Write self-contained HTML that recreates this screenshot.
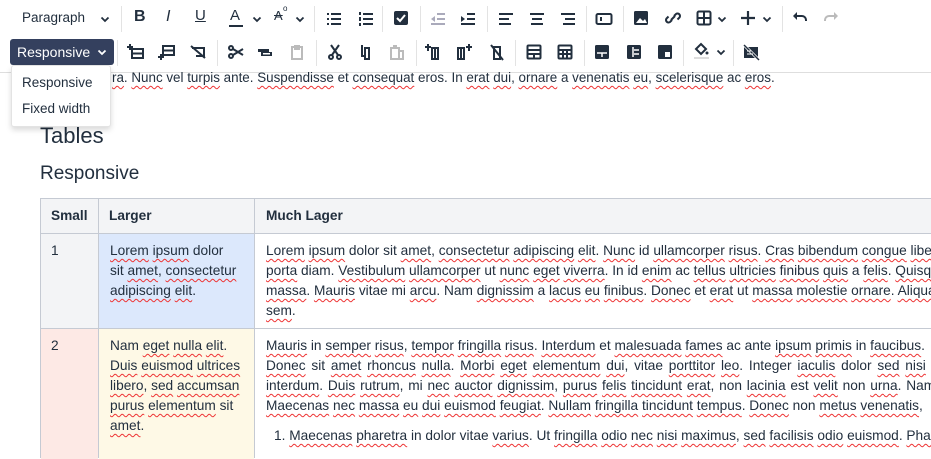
<!DOCTYPE html>
<html><head><meta charset="utf-8"><style>
*{margin:0;padding:0;box-sizing:border-box}
body{width:931px;height:451px;overflow:hidden;background:#fff;font-family:"Liberation Sans",sans-serif;color:#222f3e;position:relative}
.a{position:absolute}
.sep{position:absolute;width:1px;height:26px;background:#e3e3e3}
.ic{position:absolute;width:20px;height:20px}
.ch{position:absolute;width:10px;height:10px}
.t{position:absolute;white-space:nowrap;font-size:13.7px;line-height:20px}
.s{text-decoration:underline wavy #e33;text-decoration-thickness:1px;text-underline-offset:3px;text-decoration-skip-ink:none}
</style></head><body>
<svg width="0" height="0" style="position:absolute"><defs>
<symbol id="cv" viewBox="0 0 10 10"><path d="M1.5 3.5L5 7L8.5 3.5" fill="none" stroke="currentColor" stroke-width="1.8"/></symbol>
</defs></svg>

<!-- row 1 -->
<div class="a" style="left:22px;top:10px;font-size:13.5px;color:#222f3e">Paragraph</div>
<svg class="ch" style="left:100px;top:14px;color:#222f3e"><use href="#cv"/></svg>
<div class="sep" style="left:121px;top:6px"></div>
<div class="a" style="left:134px;top:8px;font-size:16px;font-weight:bold">B</div>
<div class="a" style="left:166px;top:8px;font-size:16px;font-style:italic">I</div>
<div class="a" style="left:195px;top:7px;font-size:15px;text-decoration:underline">U</div>
<div class="a" style="left:230px;top:7px;font-size:15px">A</div><div class="a" style="left:229px;top:25px;width:14px;height:2px;background:#222f3e"></div>
<svg class="ch" style="left:252px;top:14px"><use href="#cv"/></svg>
<div class="a" style="left:274px;top:8px;font-size:13px;text-decoration:line-through">A</div><div class="a" style="left:283px;top:4px;font-size:8px">o</div>
<svg class="ch" style="left:295px;top:14px"><use href="#cv"/></svg>
<div class="sep" style="left:314px;top:6px"></div>
<svg class="ic" style="left:324px;top:9px" viewBox="0 0 20 20"><g fill="#222f3e"><rect x="3" y="4" width="2" height="2"/><rect x="3" y="9" width="2" height="2"/><rect x="3" y="14" width="2" height="2"/><rect x="7" y="4" width="10" height="2"/><rect x="7" y="9" width="10" height="2"/><rect x="7" y="14" width="10" height="2"/></g></svg>
<svg class="ic" style="left:356px;top:9px" viewBox="0 0 20 20"><g fill="#222f3e"><rect x="3" y="3" width="2" height="3"/><rect x="3" y="8" width="2" height="4"/><rect x="3" y="14" width="2" height="3"/><rect x="7" y="4" width="10" height="2"/><rect x="7" y="9" width="10" height="2"/><rect x="7" y="14" width="10" height="2"/></g></svg>
<div class="sep" style="left:382px;top:6px"></div>
<svg class="ic" style="left:391px;top:8px" viewBox="0 0 20 20"><rect x="3" y="3" width="14" height="14" rx="2" fill="#222f3e"/><path d="M6 10l3 3 5-6" stroke="#fff" stroke-width="2" fill="none"/></svg>
<div class="sep" style="left:420px;top:6px"></div>
<svg class="ic" style="left:428px;top:9px" viewBox="0 0 20 20"><g fill="#aab"><rect x="9" y="4" width="8" height="2"/><rect x="9" y="9" width="8" height="2"/><rect x="3" y="14" width="14" height="2"/><path d="M3 10l4-3v6z"/></g></svg>
<svg class="ic" style="left:458px;top:9px" viewBox="0 0 20 20"><g fill="#222f3e"><rect x="9" y="4" width="8" height="2"/><rect x="9" y="9" width="8" height="2"/><rect x="3" y="14" width="14" height="2"/><path d="M7 10l-4-3v6z"/></g></svg>
<div class="sep" style="left:487px;top:6px"></div>
<svg class="ic" style="left:496px;top:9px" viewBox="0 0 20 20"><g fill="#222f3e"><rect x="3" y="4" width="14" height="2"/><rect x="3" y="9" width="10" height="2"/><rect x="3" y="14" width="12" height="2"/></g></svg>
<svg class="ic" style="left:527px;top:9px" viewBox="0 0 20 20"><g fill="#222f3e"><rect x="3" y="4" width="14" height="2"/><rect x="5" y="9" width="10" height="2"/><rect x="4" y="14" width="12" height="2"/></g></svg>
<svg class="ic" style="left:558px;top:9px" viewBox="0 0 20 20"><g fill="#222f3e"><rect x="3" y="4" width="14" height="2"/><rect x="7" y="9" width="10" height="2"/><rect x="5" y="14" width="12" height="2"/></g></svg>
<div class="sep" style="left:586px;top:6px"></div>
<svg class="ic" style="left:594px;top:9px" viewBox="0 0 20 20"><rect x="2.5" y="5" width="15" height="10" rx="1.5" fill="none" stroke="#222f3e" stroke-width="2"/><rect x="6" y="8" width="2" height="4" fill="#222f3e"/></svg>
<div class="sep" style="left:623px;top:6px"></div>
<svg class="ic" style="left:631px;top:8px" viewBox="0 0 20 20"><rect x="3" y="3" width="14" height="14" rx="1.5" fill="#222f3e"/><path d="M5 15l4-5 3 3 2-2 2 4z" fill="#fff"/></svg>
<svg class="ic" style="left:663px;top:8px" viewBox="0 0 20 20"><g fill="none" stroke="#222f3e" stroke-width="2"><path d="M9 12l-2 2a2.5 2.5 0 01-3.5-3.5l2-2"/><path d="M11 8l2-2a2.5 2.5 0 013.5 3.5l-2 2"/><path d="M8 12l4-4"/></g></svg>
<svg class="ic" style="left:694px;top:8px" viewBox="0 0 20 20"><rect x="3.5" y="3.5" width="13" height="13" rx="1.5" fill="none" stroke="#222f3e" stroke-width="2"/><path d="M10 4v12M4 10h12" stroke="#222f3e" stroke-width="2"/></svg>
<svg class="ch" style="left:717px;top:14px"><use href="#cv"/></svg>
<svg class="ic" style="left:738px;top:8px" viewBox="0 0 20 20"><path d="M10 3v14M3 10h14" stroke="#222f3e" stroke-width="2.2"/></svg>
<svg class="ch" style="left:762px;top:14px"><use href="#cv"/></svg>
<div class="sep" style="left:782px;top:6px"></div>
<svg class="ic" style="left:790px;top:8px" viewBox="0 0 20 20"><path d="M6 8h6a4 4 0 014 4v1" fill="none" stroke="#222f3e" stroke-width="2"/><path d="M3 8l4-4v8z" fill="#222f3e"/></svg>
<svg class="ic" style="left:821px;top:8px" viewBox="0 0 20 20"><path d="M14 8H8a4 4 0 00-4 4v1" fill="none" stroke="#bbb" stroke-width="2"/><path d="M17 8l-4-4v8z" fill="#bbb"/></svg>

<!-- row 2 -->
<div class="a" style="left:10px;top:39px;width:104px;height:26px;background:#34405e;border-radius:3px"></div>
<div class="a" style="left:17px;top:44px;font-size:14px;color:#fff">Responsive</div>
<svg class="ch" style="left:97px;top:47px;color:#fff"><use href="#cv"/></svg>
<div class="sep" style="left:117px;top:40px"></div>
<svg class="ic" style="left:126px;top:42px" viewBox="0 0 20 20"><g fill="none" stroke="#222f3e" stroke-width="2"><rect x="6" y="7" width="11" height="9"/><path d="M6 11.5h11"/><path d="M4 2v6M1 5h6"/></g></svg>
<svg class="ic" style="left:157px;top:42px" viewBox="0 0 20 20"><g fill="none" stroke="#222f3e" stroke-width="2"><rect x="6" y="4" width="11" height="9"/><path d="M6 8.5h11"/><path d="M4 12v6M1 15h6"/></g></svg>
<svg class="ic" style="left:188px;top:42px" viewBox="0 0 20 20"><g fill="none" stroke="#222f3e" stroke-width="2"><path d="M4 6h12v8H8"/><path d="M3 4l14 12"/></g></svg>
<div class="sep" style="left:217px;top:40px"></div>
<svg class="ic" style="left:226px;top:42px" viewBox="0 0 20 20"><g fill="none" stroke="#222f3e" stroke-width="2"><circle cx="5" cy="6" r="2"/><circle cx="5" cy="14" r="2"/><path d="M7 7l10 6M7 13l10-6"/></g></svg>
<svg class="ic" style="left:255px;top:42px" viewBox="0 0 20 20"><g fill="#222f3e"><rect x="3" y="7" width="11" height="3"/><rect x="6" y="10" width="11" height="4"/></g><rect x="8" y="11" width="7" height="1.5" fill="#fff"/></svg>
<svg class="ic" style="left:287px;top:42px" viewBox="0 0 20 20"><g fill="none" stroke="#bbb" stroke-width="2"><rect x="5" y="5" width="10" height="12"/><path d="M8 4h4v3H8z"/></g></svg>
<div class="sep" style="left:316px;top:40px"></div>
<svg class="ic" style="left:325px;top:42px" viewBox="0 0 20 20"><g fill="none" stroke="#222f3e" stroke-width="2"><circle cx="6" cy="15" r="2"/><circle cx="14" cy="15" r="2"/><path d="M7 13l7-10M13 13L6 3"/></g></svg>
<svg class="ic" style="left:355px;top:42px" viewBox="0 0 20 20"><g fill="none" stroke="#222f3e" stroke-width="2"><path d="M7 3v11h3"/><rect x="10" y="6" width="4" height="11"/></g></svg>
<svg class="ic" style="left:387px;top:42px" viewBox="0 0 20 20"><g fill="none" stroke="#bbb" stroke-width="2"><rect x="4" y="6" width="8" height="11"/><rect x="12" y="9" width="4" height="8"/><path d="M6 4h4"/></g></svg>
<div class="sep" style="left:416px;top:40px"></div>
<svg class="ic" style="left:423px;top:42px" viewBox="0 0 20 20"><g fill="none" stroke="#222f3e" stroke-width="2"><rect x="9" y="6" width="6" height="11"/><path d="M12 6v11M5 2v7M2 5h6"/></g></svg>
<svg class="ic" style="left:454px;top:42px" viewBox="0 0 20 20"><g fill="none" stroke="#222f3e" stroke-width="2"><rect x="4" y="6" width="6" height="11"/><path d="M7 6v11M15 2v7M12 5h6"/></g></svg>
<svg class="ic" style="left:487px;top:42px" viewBox="0 0 20 20"><g fill="none" stroke="#222f3e" stroke-width="2"><path d="M7 5h6v12H7z"/><path d="M4 3l12 15"/></g></svg>
<div class="sep" style="left:515px;top:40px"></div>
<svg class="ic" style="left:524px;top:42px" viewBox="0 0 20 20"><g fill="none" stroke="#222f3e" stroke-width="2"><rect x="3.5" y="3.5" width="13" height="13" rx="1"/><path d="M4 8h12M4 12h12M10 12v4"/></g></svg>
<svg class="ic" style="left:555px;top:42px" viewBox="0 0 20 20"><g fill="none" stroke="#222f3e" stroke-width="2"><rect x="3.5" y="3.5" width="13" height="13" rx="1"/><path d="M4 8h12M4 12h12M8 8v8M12 8v8"/></g></svg>
<div class="sep" style="left:584px;top:40px"></div>
<svg class="ic" style="left:592px;top:42px" viewBox="0 0 20 20"><rect x="3" y="3" width="14" height="14" rx="1.5" fill="#222f3e"/><path d="M5 11h10M10 11v4" stroke="#fff" stroke-width="1.5"/></svg>
<svg class="ic" style="left:624px;top:42px" viewBox="0 0 20 20"><rect x="3" y="3" width="14" height="14" rx="1.5" fill="#222f3e"/><path d="M9 5v10M10 8h5M10 12h5" stroke="#fff" stroke-width="1.5"/></svg>
<svg class="ic" style="left:655px;top:42px" viewBox="0 0 20 20"><rect x="3" y="3" width="14" height="14" rx="1.5" fill="#222f3e"/><rect x="10" y="10" width="5" height="5" fill="#fff"/></svg>
<div class="sep" style="left:683px;top:40px"></div>
<svg class="ic" style="left:691px;top:40px" viewBox="0 0 20 20"><path d="M5 9l5-5 5 5-5 5z" fill="none" stroke="#222f3e" stroke-width="2"/><circle cx="16" cy="13" r="1.5" fill="#222f3e"/><rect x="3" y="17" width="15" height="2" fill="#ddd"/></svg>
<svg class="ch" style="left:716px;top:47px"><use href="#cv"/></svg>
<div class="sep" style="left:733px;top:40px"></div>
<svg class="ic" style="left:741px;top:42px" viewBox="0 0 20 20"><rect x="3" y="5" width="14" height="11" fill="#222f3e"/><path d="M3 3l15 15" stroke="#fff" stroke-width="3"/><path d="M3 3l15 15" stroke="#222f3e" stroke-width="1.5"/><path d="M6 9h4M6 12h6" stroke="#fff" stroke-width="1"/></svg>

<div class="a" style="left:0;top:72px;width:931px;height:1px;background:#dedede"></div>

<!-- content -->
<div class="t" style="left:112px;top:68px;font-size:13.4px"><span class="s">ra</span>. <span class="s">Nunc</span> vel <span class="s">turpis</span> ante. <span class="s">Suspendisse</span> et <span class="s">consequat</span> eros. In <span class="s">erat</span> <span class="s">dui</span>, <span class="s">ornare</span> a <span class="s">venenatis</span> <span class="s">eu</span>, <span class="s">scelerisque</span> ac <span class="s">eros</span>.</div>
<div class="a" style="left:40px;top:123px;font-size:22px;color:#222f3e">Tables</div>
<div class="a" style="left:40px;top:163px;font-size:19px;color:#222f3e">Responsive</div>

<!-- table -->
<div class="a" style="left:40px;top:198px;width:920px;height:260px;border:1px solid #c5cad3;border-right:none;border-bottom:none"></div>
<div class="a" style="left:41px;top:199px;width:900px;height:34px;background:#f3f4f6"></div>
<div class="a" style="left:41px;top:234px;width:57px;height:94px;background:#f3f4f6"></div>
<div class="a" style="left:99px;top:234px;width:155px;height:94px;background:#dce8fc"></div>
<div class="a" style="left:41px;top:329px;width:57px;height:130px;background:#fde9e5"></div>
<div class="a" style="left:99px;top:329px;width:155px;height:130px;background:#fef9e6"></div>
<div class="a" style="left:98px;top:198px;width:1px;height:260px;background:#c5cad3"></div>
<div class="a" style="left:254px;top:198px;width:1px;height:260px;background:#c5cad3"></div>
<div class="a" style="left:40px;top:233px;width:900px;height:1px;background:#c5cad3"></div>
<div class="a" style="left:40px;top:328px;width:900px;height:1px;background:#c5cad3"></div>

<div class="t" style="left:51px;top:206px;font-weight:bold">Small</div>
<div class="t" style="left:109px;top:206px;font-weight:bold">Larger</div>
<div class="t" style="left:266px;top:206px;font-weight:bold">Much Lager</div>

<div class="t" style="left:51px;top:241px">1</div>
<div class="t" style="left:110px;top:241px"><span class="s">Lorem</span> <span class="s">ipsum</span> dolor</div>
<div class="t" style="left:110px;top:261px">sit <span class="s">amet</span>, <span class="s">consectetur</span></div>
<div class="t" style="left:110px;top:281px"><span class="s">adipiscing</span> <span class="s">elit</span>.</div>

<div class="t" style="left:266px;top:241px"><span class="s">Lorem</span> <span class="s">ipsum</span> dolor sit <span class="s">amet</span>, <span class="s">consectetur</span> <span class="s">adipiscing</span> <span class="s">elit</span>. <span class="s">Nunc</span> id <span class="s">ullamcorper</span> <span class="s">risus</span>. <span class="s">Cras</span> <span class="s">bibendum</span> <span class="s">congue</span> <span class="s">libero</span></div>
<div class="t" style="left:266px;top:261px"><span class="s">porta</span> diam. <span class="s">Vestibulum</span> <span class="s">ullamcorper</span> ut <span class="s">nunc</span> <span class="s">eget</span> <span class="s">viverra</span>. In id <span class="s">enim</span> ac <span class="s">tellus</span> <span class="s">ultricies</span> <span class="s">finibus</span> <span class="s">quis</span> a <span class="s">felis</span>. <span class="s">Quisque</span></div>
<div class="t" style="left:266px;top:281px"><span class="s">massa</span>. <span class="s">Mauris</span> vitae mi <span class="s">arcu</span>. Nam <span class="s">dignissim</span> a <span class="s">lacus</span> <span class="s">eu</span> <span class="s">finibus</span>. <span class="s">Donec</span> et <span class="s">erat</span> ut <span class="s">massa</span> <span class="s">molestie</span> <span class="s">ornare</span>. <span class="s">Aliquam</span></div>
<div class="t" style="left:266px;top:301px"><span class="s">sem</span>.</div>

<div class="t" style="left:51px;top:336px">2</div>
<div class="t" style="left:110px;top:336px">Nam <span class="s">eget</span> <span class="s">nulla</span> <span class="s">elit</span>.</div>
<div class="t" style="left:110px;top:356px"><span class="s">Duis</span> <span class="s">euismod</span> <span class="s">ultrices</span></div>
<div class="t" style="left:110px;top:376px"><span class="s">libero</span>, <span class="s">sed</span> <span class="s">accumsan</span></div>
<div class="t" style="left:110px;top:396px"><span class="s">purus</span> <span class="s">elementum</span> sit</div>
<div class="t" style="left:110px;top:416px"><span class="s">amet</span>.</div>

<div class="t" style="left:266px;top:336px"><span class="s">Mauris</span> in <span class="s">semper</span> <span class="s">risus</span>, <span class="s">tempor</span> <span class="s">fringilla</span> <span class="s">risus</span>. <span class="s">Interdum</span> et <span class="s">malesuada</span> <span class="s">fames</span> ac ante <span class="s">ipsum</span> <span class="s">primis</span> in <span class="s">faucibus</span>.</div>
<div class="t" style="left:266px;top:356px;word-spacing:2px"><span class="s">Donec</span> sit <span class="s">amet</span> <span class="s">rhoncus</span> <span class="s">nulla</span>. <span class="s">Morbi</span> <span class="s">eget</span> <span class="s">elementum</span> <span class="s">dui</span>, vitae <span class="s">porttitor</span> <span class="s">leo</span>. Integer <span class="s">iaculis</span> dolor <span class="s">sed</span> <span class="s">nisi</span></div>
<div class="t" style="left:266px;top:376px;word-spacing:1px"><span class="s">interdum</span>. <span class="s">Duis</span> <span class="s">rutrum</span>, mi <span class="s">nec</span> <span class="s">auctor</span> <span class="s">dignissim</span>, <span class="s">purus</span> <span class="s">felis</span> <span class="s">tincidunt</span> <span class="s">erat</span>, non <span class="s">lacinia</span> est <span class="s">velit</span> non <span class="s">urna</span>. Nam</div>
<div class="t" style="left:266px;top:396px"><span class="s">Maecenas</span> <span class="s">nec</span> <span class="s">massa</span> <span class="s">eu</span> <span class="s">dui</span> <span class="s">euismod</span> <span class="s">feugiat</span>. <span class="s">Nullam</span> <span class="s">fringilla</span> <span class="s">tincidunt</span> <span class="s">tempus</span>. <span class="s">Donec</span> non <span class="s">metus</span> <span class="s">venenatis</span>,</div>
<div class="t" style="left:274px;top:426px">1. <span class="s">Maecenas</span> <span class="s">pharetra</span> in dolor vitae <span class="s">varius</span>. Ut <span class="s">fringilla</span> <span class="s">odio</span> <span class="s">nec</span> <span class="s">nisi</span> <span class="s">maximus</span>, <span class="s">sed</span> <span class="s">facilisis</span> <span class="s">odio</span> <span class="s">euismod</span>. <span class="s">Phasellus</span></div>

<!-- dropdown menu -->
<div class="a" style="left:11px;top:65px;width:100px;height:62px;background:#fff;border:1px solid #e3e3e3;border-radius:3px;box-shadow:0 3px 6px rgba(0,0,0,.15)"></div>
<div class="a" style="left:22px;top:75px;font-size:13.5px;color:#222f3e">Responsive</div>
<div class="a" style="left:22px;top:101px;font-size:13.5px;color:#222f3e">Fixed width</div>
</body></html>
